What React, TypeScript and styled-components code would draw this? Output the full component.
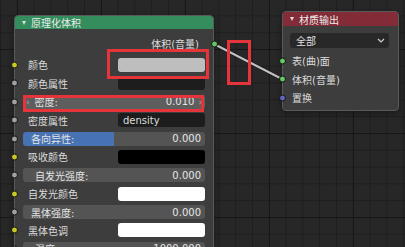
import * as React from "react";
import styled, { createGlobalStyle } from "styled-components";

const GlobalStyle = createGlobalStyle`
  html, body {
    margin: 0;
    padding: 0;
    background: #262626;
  }
  body {
    font-family: "DejaVu Sans", "Noto Sans CJK SC", sans-serif;
    font-size: 10px;
  }
`;

const Canvas = styled.div`
  position: relative;
  width: 405px;
  height: 247px;
  overflow: hidden;
  background-color: #272727;
  background-image: linear-gradient(to right, #171717 1px, transparent 1px),
    linear-gradient(to bottom, #171717 1px, transparent 1px),
    linear-gradient(to right, #1e1e1e 1px, transparent 1px),
    linear-gradient(to bottom, #1e1e1e 1px, transparent 1px);
  background-size: 84px 84px, 84px 84px, 16.8px 16.8px, 16.8px 16.8px;
  background-position: 17px 0, 0 49px, 0 0, 0 15.4px;
`;

const Links = styled.svg`
  position: absolute;
  left: 0;
  top: 0;
  pointer-events: none;
`;

const Node = styled.div<{ x: number; y: number; w: number }>`
  position: absolute;
  left: ${(p) => p.x}px;
  top: ${(p) => p.y}px;
  width: ${(p) => p.w}px;
  box-sizing: border-box;
  background: #3d3d3d;
  border: 1px solid #5a5a5a;
  border-radius: 4px;
  box-shadow: 0 2px 6px rgba(0, 0, 0, 0.35);
  color: #dcdcdc;
`;

const Header = styled.div<{ bg: string; h: number }>`
  display: flex;
  align-items: center;
  gap: 5px;
  height: ${(p) => p.h}px;
  padding-left: 7px;
  background: ${(p) => p.bg};
  border-radius: 3px 3px 0 0;
  color: #ececec;
`;

const Caret = styled.span`
  width: 0;
  height: 0;
  border-left: 2.5px solid transparent;
  border-right: 2.5px solid transparent;
  border-top: 4px solid #dcdcdc;
`;

const Body = styled.div<{ top: number; bottom: number }>`
  display: flex;
  flex-direction: column;
  padding: ${(p) => p.top}px 0 ${(p) => p.bottom}px;
`;

const Row = styled.div<{ h?: number; end?: boolean }>`
  position: relative;
  display: flex;
  align-items: center;
  justify-content: ${(p) => (p.end ? "flex-end" : "flex-start")};
  height: ${(p) => p.h ?? 18.4}px;
  padding: 0 8px;
`;

const Socket = styled.span<{ color: string; side?: "left" | "right" }>`
  position: absolute;
  top: 50%;
  ${(p) => (p.side === "right" ? "right: -4.5px;" : "left: -4.5px;")}
  width: 7px;
  height: 7px;
  box-sizing: border-box;
  border-radius: 50%;
  background: ${(p) => p.color};
  border: 1px solid #141414;
  transform: translateY(-50%);
`;

const Label = styled.span<{ pad?: number }>`
  flex: 1;
  padding-left: ${(p) => p.pad ?? 5}px;
  white-space: nowrap;
`;

const OutLabel = styled.span`
  padding-right: 6px;
`;

const Swatch = styled.div<{ color: string }>`
  width: 87px;
  height: 14px;
  border-radius: 3px;
  background: ${(p) => p.color};
`;

const TextField = styled.div`
  display: flex;
  align-items: center;
  box-sizing: border-box;
  width: 87px;
  height: 14px;
  padding-left: 5px;
  border-radius: 3px;
  background: #1d1d1d;
  color: #dddddd;
`;

const Slider = styled.div<{ hover?: boolean; indent?: number }>`
  flex: 1;
  display: flex;
  align-items: center;
  justify-content: space-between;
  height: 14px;
  padding: 0 ${(p) => (p.hover ? 3 : 4)}px 0 ${(p) => (p.hover ? 3 : p.indent ?? 8)}px;
  border-radius: 3px;
  background-color: ${(p) => (p.hover ? "#5e5e5e" : "#545454")};
  color: #e4e4e4;
  white-space: nowrap;
  overflow: hidden;
`;

const Arrow = styled.span`
  color: #b0b0b0;
  font-size: 9px;
`;

const SliderLabel = styled.span`
  flex: 1;
`;

const SliderValue = styled.span`
  color: #e6e6e6;
`;

const Dropdown = styled.div`
  display: flex;
  align-items: center;
  justify-content: space-between;
  height: 15px;
  margin: 0 9px 0 7px;
  padding: 0 4px 0 6px;
  border-radius: 3px;
  background: #282828;
  color: #e0e0e0;
`;

const Highlight = styled.div<{ x: number; y: number; w: number; h: number }>`
  position: absolute;
  left: ${(p) => p.x}px;
  top: ${(p) => p.y}px;
  width: ${(p) => p.w}px;
  height: ${(p) => p.h}px;
  box-sizing: border-box;
  border: 3px solid #e5353b;
  pointer-events: none;
`;

const YELLOW = "#c7c729";
const GRAY = "#a1a1a1";
const GREEN = "#63c763";
const PURPLE = "#6363c7";

type Field = { label: string; socket: string; swatch?: string; text?: string };

const ValueSlider = ({
  label,
  value,
  fill,
  hover,
  indent,
}: {
  label: string;
  value: string;
  fill?: number;
  hover?: boolean;
  indent?: number;
}) => (
  <Slider
    hover={hover}
    indent={indent}
    style={
      fill
        ? {
            backgroundImage: `linear-gradient(to right, #4772b3 ${fill * 100}%, transparent ${fill * 100}%)`,
          }
        : undefined
    }
  >
    {hover && <Arrow>‹</Arrow>}
    <SliderLabel style={hover ? { paddingLeft: 5 } : undefined}>{label}</SliderLabel>
    <SliderValue>{value}</SliderValue>
    {hover && <Arrow style={{ paddingLeft: 4 }}>›</Arrow>}
  </Slider>
);

const FieldRow = ({ label, socket, swatch, text }: Field) => (
  <Row>
    <Socket color={socket} />
    <Label>{label}</Label>
    {text !== undefined ? <TextField>{text}</TextField> : <Swatch color={swatch ?? "#000"} />}
  </Row>
);

const SliderRow = (props: {
  label: string;
  value: string;
  fill?: number;
  hover?: boolean;
  indent?: number;
}) => (
  <Row>
    <Socket color={GRAY} />
    <ValueSlider {...props} />
  </Row>
);

const App = () => {
  return (
    <>
      <GlobalStyle />
      <Canvas>
        <Links width={405} height={247}>
          <line x1={214} y1={44} x2={282} y2={79} stroke="#1a1a1a" strokeWidth={3.5} />
          <line x1={214} y1={44} x2={282} y2={79} stroke="#c2c2c2" strokeWidth={2} />
        </Links>

        <Node x={14} y={15} w={200}>
          <Header bg="#348d5c" h={13}>
            <Caret />
            <span>原理化体积</span>
          </Header>
          <Body top={5.8} bottom={0}>
            <Row end h={18.4} style={{ marginBottom: 2.6 }}>
              <OutLabel>体积(音量)</OutLabel>
              <Socket color={GREEN} side="right" />
            </Row>
            <FieldRow label="颜色" socket={YELLOW} swatch="#bebebe" />
            <FieldRow label="颜色属性" socket={GRAY} swatch="#1d1d1d" />
            <SliderRow label="密度:" value="0.010" hover />
            <FieldRow label="密度属性" socket={GRAY} text="density" />
            <SliderRow label="各向异性:" value="0.000" fill={0.5} />
            <FieldRow label="吸收颜色" socket={YELLOW} swatch="#000000" />
            <SliderRow label="自发光强度:" value="0.000" indent={12} />
            <FieldRow label="自发光颜色" socket={YELLOW} swatch="#ffffff" />
            <SliderRow label="黑体强度:" value="0.000" />
            <FieldRow label="黑体色调" socket={YELLOW} swatch="#ffffff" />
            <SliderRow label="温度:" value="1000.000" indent={12} />
          </Body>
        </Node>

        <Node x={282} y={11} w={117}>
          <Header bg="#832b36" h={14}>
            <Caret />
            <span>材质输出</span>
          </Header>
          <Body top={7} bottom={2.5}>
            <Dropdown>
              <span>全部</span>
              <svg width="8" height="5" viewBox="0 0 8 5">
                <polyline points="1,1 4,4 7,1" fill="none" stroke="#cfcfcf" strokeWidth="1.2" />
              </svg>
            </Dropdown>
            <Row h={18.5} style={{ marginTop: 3.5 }}>
              <Socket color={GREEN} />
              <Label pad={1}>表(曲)面</Label>
            </Row>
            <Row h={18.5}>
              <Socket color={GREEN} />
              <Label pad={1}>体积(音量)</Label>
            </Row>
            <Row h={18.5}>
              <Socket color={PURPLE} />
              <Label pad={1}>置换</Label>
            </Row>
          </Body>
        </Node>

        <Highlight x={107} y={49} w={102} h={30} />
        <Highlight x={23} y={95} w={181} h={17} />
        <Highlight x={227} y={40} w={24} h={45} />
      </Canvas>
    </>
  );
};

export default App;
